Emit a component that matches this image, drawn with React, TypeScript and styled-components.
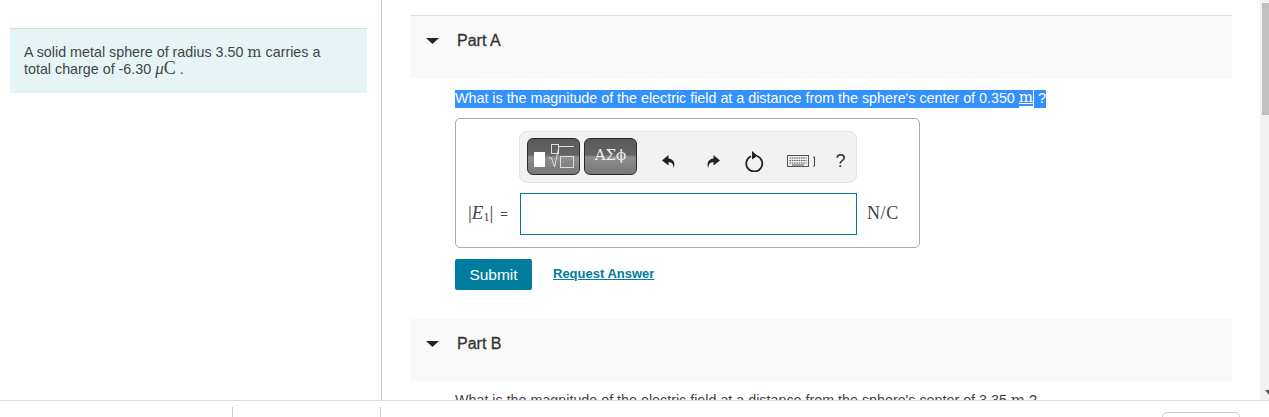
import React from "react";
import styled, { createGlobalStyle } from "styled-components";

const Global = createGlobalStyle`
  html, body { margin: 0; padding: 0; height: 100%; overflow: hidden; background: #fff; }
  #root { height: 417px; }
  * { box-sizing: border-box; }
`;
const Page = styled.div`
  height: 417px; display: flex; flex-direction: column;
  font-family: "Liberation Sans", Arial, sans-serif; font-size: 14.3px; color: #444;
`;
const Main = styled.div`display: flex; height: 400px; overflow: hidden;`;
const Left = styled.aside`
  width: 382px; flex: none; border-right: 1px solid #c4ccd2; padding: 28px 14px 0 10px;
`;
const Note = styled.div`
  height: 65px; background: #e5f5f6; border-top: 1px solid #d3dde0; padding: 15px 30px 0 14px; line-height: 17px;
`;
const M = styled.span`font-family: "DejaVu Serif", "Liberation Serif", serif; font-size: 15px; line-height: 0;`;
const MI = styled.span`font-style: italic; font-family: "Liberation Serif", serif; font-size: 17px; line-height: 0;`;
const MC = styled.span`font-family: "Liberation Serif", serif; font-size: 18px; line-height: 0;`;
const Right = styled.section`flex: 1; padding: 15px 28px 0 29px; overflow: hidden;`;
const PartHead = styled.div<{ $top?: boolean }>`
  height: ${(p) => (p.$top ? 63 : 62)}px; background: #f8f8f8; padding: 15px 0 0 15px;
  ${(p) => p.$top && "border-top: 1px solid #ddd;"}
  display: flex; align-items: flex-start; font-size: 16px; line-height: 20px; color: #333;
  -webkit-text-stroke: 0.3px #333;
`;
const Caret = styled.svg`width: 13px; height: 6px; margin: 7px 18px 0 0; flex: none;`;
const Body = styled.div`padding-left: 44px;`;
const Question = styled.div`margin-top: 12px; height: 18px; display: flex; white-space: pre; line-height: 17px;`;
const Selected = styled.span`background: #3390ff; color: #fff; height: 18px;`;
const SelectedMath = styled(Selected)`height: 16px; margin-right: 1px; font-family: "DejaVu Serif", serif; font-size: 15px; line-height: 15px; text-decoration: underline;`;
const Answer = styled.div`
  margin-top: 10px; width: 465px; height: 130px; border: 1px solid #aaa; border-radius: 5px;
  padding: 12px 0 0 12px; display: grid; grid-template-columns: 52px 337px auto; grid-template-rows: 52px 42px;
  row-gap: 10px;
`;
const Toolbar = styled.div`
  grid-column: 2; grid-row: 1; background: #f2f2f2; border: 1px solid #e2e2e2; border-radius: 8px; margin-left: -1px;
  display: flex; align-items: flex-start; padding: 6px 0 0 7px;
`;
const TemplateBtn = styled.div`
  width: 53px; height: 37px; border: 1px solid #2b2b2b; border-radius: 6px; margin-right: 4px; flex: none;
  background: linear-gradient(#5a5a5a 0, #646464 45%, #8e8e8e 52%, #777 100%);
  color: #eee; display: flex; align-items: center; justify-content: center;
  font-family: "DejaVu Serif", serif; font-size: 15px; padding-bottom: 3px;
`;
const RadicalBtn = styled(TemplateBtn)`padding: 0;`;
const Tool = styled.div<{ $w: number }>`
  width: ${(p) => p.$w}px; flex: none; display: flex; justify-content: center; align-items: center;
  color: #333; font-size: 18px; height: 46px;
`;
const Label = styled.div`
  grid-column: 1; grid-row: 2; display: flex; align-items: center; color: #444; font-size: 13px; white-space: nowrap; padding-bottom: 2px;
`;
const LabelMath = styled.span`font-family: "Liberation Serif", serif; font-size: 19px; margin-right: 7px; color: #444;`;
const Sub = styled.sub`font-size: 12px; font-style: normal; vertical-align: -2px; line-height: 0;`;
const Input = styled.div`grid-column: 2; grid-row: 2; border: 1px solid #007c9e;`;
const Unit = styled.div`
  grid-column: 3; grid-row: 2; display: flex; align-items: center; padding: 0 0 2px 10px; font-family: "Liberation Serif", serif; font-size: 18px; color: #444; letter-spacing: .6px;
`;
const Actions = styled.div`display: flex; align-items: center; margin-top: 11px; height: 31px;`;
const Submit = styled.button`
  width: 77px; height: 31px; border: 0; background: #007c9e; color: #fff; border-radius: 2px; font: inherit; font-size: 15.500px; padding: 0;
`;
const ReqLink = styled.a`
  margin-left: 21px; color: #007c9e; font-weight: 700; font-size: 13px; text-decoration: underline; position: relative; top: -1px;
`;
const Gap = styled.div`height: 29px;`;
const Clipped = styled.p`margin: 11px 0 0; line-height: 17px; white-space: nowrap; color: #444;`;
const Scroll = styled.div`width: 9px; flex: none; background: #f1f1f1; position: relative; padding: 3px 0 0 2px;`;
const Thumb = styled.div`height: 112px; background: #c1c1c1;`;
const ScrollArrow = styled.svg`position: absolute; left: 5px; top: 390px; width: 8px; height: 5px;`;
const Foot = styled.footer`
  height: 17px; border-top: 1px solid #ddd; display: flex; overflow: hidden; padding-top: 6px;
`;
const Tick = styled.div<{ $w: number }>`
  width: ${(p) => p.$w}px; height: 11px; border-right: 1px solid #ccc; flex: none;
`;
const FootBtn = styled.div`
  width: 78px; height: 30px; border: 1px solid #ccc; border-radius: 5px; margin: 5px 0 0 781px; flex: none;
`;

const CaretIcon = () => (
  <Caret viewBox="0 0 13 6"><path d="M0 0h13L6.500 6z" fill="#222" /></Caret>
);
const Undo = ({ flip }: { flip?: boolean }) => (
  <svg width="16" height="15" viewBox="0 0 15 15" style={flip ? { transform: "scaleX(-1)" } : undefined}>
    <path d="M7 1 0.500 6.500 7 11.500V8.300c3 0 4.600 1 5.200 5.700 2-5-.2-9.200-5.200-9.600z" fill="#222" />
  </svg>
);
const Rotate = () => (
  <svg width="20" height="22" viewBox="0 0 20 22" fill="none">
    <path d="M13 6a8 8 0 1 1-6 .2" stroke="#222" strokeWidth="1.800" />
    <path d="M8 1 13.500 5.700 8 9.500z" fill="#222" />
  </svg>
);
const Keyboard = () => (
  <svg width="32" height="14" viewBox="0 0 32 14" fill="none">
    <rect x=".5" y="1.500" width="21" height="11" fill="#eee" stroke="#555" />
    <path d="M2.500 4h17M2.500 6.500h17M2.500 9h17" stroke="#555" strokeDasharray="1.500 .8" />
    <path d="M5 11h12" stroke="#555" />
    <path d="M26 3h1.500v9H26" stroke="#444" />
  </svg>
);
const Radical = () => (
  <svg width="51" height="35" viewBox="0 0 51 35" fill="none">
    <rect x="6" y="13" width="11" height="15" fill="#fff" />
    <rect x="23.500" y="5.500" width="7" height="9" stroke="#ddd" />
    <path d="M21 19h2.500l3 9L31 7.500h15" stroke="#ddd" />
    <rect x="32.500" y="17.500" width="13" height="11" stroke="#ddd" />
  </svg>
);

export default function App() {
  return (
    <Page>
      <Global />
      <Main>
        <Left>
          <Note>
            A solid metal sphere of radius 3.50 <M>m</M> carries a total charge of -6.30 <MI>μ</MI><MC>C</MC> .
          </Note>
        </Left>
        <Right>
          <PartHead $top><CaretIcon />Part A</PartHead>
          <Body>
            <Question>
              <Selected>What is the magnitude of the electric field at a distance from the sphere's center of 0.350 </Selected>
              <SelectedMath>m</SelectedMath>
              <Selected> ?</Selected>
            </Question>
            <Answer>
              <Toolbar>
                <RadicalBtn><Radical /></RadicalBtn>
                <TemplateBtn>ΑΣϕ</TemplateBtn>
                <Tool $w={55}><Undo /></Tool>
                <Tool $w={34}><Undo flip /></Tool>
                <Tool $w={47}><Rotate /></Tool>
                <Tool $w={51}><Keyboard /></Tool>
                <Tool $w={25}>?</Tool>
              </Toolbar>
              <Label><LabelMath>|<i>E</i><Sub>1</Sub>|</LabelMath> =</Label>
              <Input />
              <Unit>N/C</Unit>
            </Answer>
            <Actions>
              <Submit>Submit</Submit>
              <ReqLink>Request Answer</ReqLink>
            </Actions>
          </Body>
          <Gap />
          <PartHead><CaretIcon />Part B</PartHead>
          <Body>
            <Clipped>What is the magnitude of the electric field at a distance from the sphere's center of 3.35 <M>m</M> ?</Clipped>
          </Body>
        </Right>
        <Scroll>
          <Thumb />
          <ScrollArrow viewBox="0 0 8 5"><path d="M0 0h8L4 5z" fill="#555" /></ScrollArrow>
        </Scroll>
      </Main>
      <Foot>
        <Tick $w={233} />
        <Tick $w={148} />
        <FootBtn />
      </Foot>
    </Page>
  );
}
